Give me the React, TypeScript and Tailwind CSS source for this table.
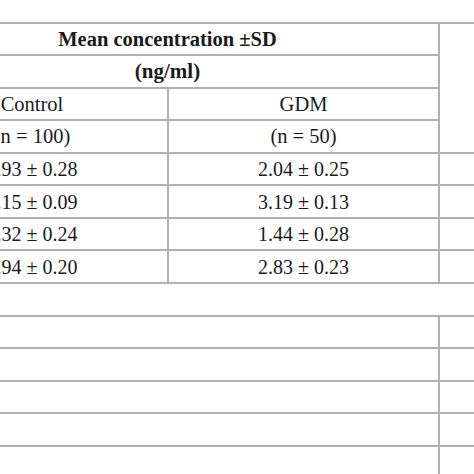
export default function App() {
  const rows = [
    ["1.93 ± 0.28", "2.04 ± 0.25"],
    ["2.15 ± 0.09", "3.19 ± 0.13"],
    ["1.32 ± 0.24", "1.44 ± 0.28"],
    ["2.94 ± 0.20", "2.83 ± 0.23"],
  ];
  const cell = "flex items-center justify-center border-t-2 border-[#b0b0b0]";

  return (
    <div className="w-[474px] h-[474px] overflow-hidden bg-white text-[#1a1a1a] text-[20.5px] leading-none font-['Liberation_Serif','Times_New_Roman',serif]">
      <div className="ml-[-103px] w-[680px] pt-[22px]">
        {/* Upper table */}
        <div className="grid grid-cols-[270px_271px_1fr] grid-rows-[32px_33px_32px_33px_32px_33px_32px_33px] border-b-2 border-[#b0b0b0]">
          <div className={`${cell} col-span-2 font-bold`}>Mean concentration ±SD</div>
          <div className={`${cell} row-span-4 border-l-2`} />
          <div className={`${cell} col-span-2 font-bold text-[21px]`}>(ng/ml)</div>
          <div className={cell}>Control</div>
          <div className={`${cell} border-l-2`}>GDM</div>
          <div className={cell}>(n = 100)</div>
          <div className={`${cell} border-l-2`}>(n = 50)</div>
          {rows.map((r, i) => (
            <div key={i} className="contents">
              <div className={`${cell} text-[20px]`}>{r[0]}</div>
              <div className={`${cell} border-l-2 text-[20px]`}>{r[1]}</div>
              <div className={`${cell} border-l-2`} />
            </div>
          ))}
        </div>

        {/* Lower table */}
        <div className="mt-[31px] grid grid-cols-[541px_1fr] grid-rows-[32px_33px_32px_33px_60px]">
          {[0, 1, 2, 3, 4].map((i) => (
            <div key={i} className="contents">
              <div className={cell} />
              <div className={`${cell} border-l-2`} />
            </div>
          ))}
        </div>
      </div>
    </div>
  );
}
